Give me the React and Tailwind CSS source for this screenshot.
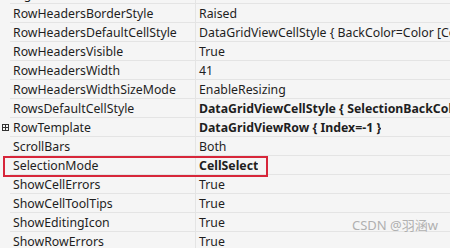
import React from "react";

const rows = [
  { n: "RightToLeft", v: "No" },
  { n: "RowHeadersBorderStyle", v: "Raised" },
  { n: "RowHeadersDefaultCellStyle", v: "DataGridViewCellStyle { BackColor=Color [Control] }" },
  { n: "RowHeadersVisible", v: "True" },
  { n: "RowHeadersWidth", v: "41" },
  { n: "RowHeadersWidthSizeMode", v: "EnableResizing" },
  { n: "RowsDefaultCellStyle", v: "DataGridViewCellStyle { SelectionBackColor=Color [Red] }", b: true },
  { n: "RowTemplate", v: "DataGridViewRow { Index=-1 }", b: true, exp: true },
  { n: "ScrollBars", v: "Both" },
  { n: "SelectionMode", v: "CellSelect", b: true },
  { n: "ShowCellErrors", v: "True" },
  { n: "ShowCellToolTips", v: "True" },
  { n: "ShowEditingIcon", v: "True" },
  { n: "ShowRowErrors", v: "True" },
];

export default function App() {
  return (
    <div
      className="relative w-[450px] h-[248px] overflow-hidden bg-[#f5f5f5] text-[12.3px] text-[#1e1e1e]"
      style={{ fontFamily: '"Noto Sans", "Noto Sans CJK SC", sans-serif' }}
    >
      <div className="flex flex-col mt-[-15px]">
        {rows.map((r, i) => (
          <div key={i} className="flex h-[19px] leading-[20px]">
            <div className="w-[10px] shrink-0 flex items-center justify-center">
              {r.exp && (
                <div className="w-[7px] h-[7px] border border-[#333] flex items-center justify-center relative">
                  <div className="w-[5px] h-[1px] bg-[#333]" />
                  <div className="absolute w-[1px] h-[5px] bg-[#333]" />
                </div>
              )}
            </div>
            <div className="flex flex-1 border-b border-[#e4e4e4]">
              <div className="w-[186px] shrink-0 pl-[3px] border-r border-[#e4e4e4] whitespace-nowrap overflow-hidden">
                {r.n}
              </div>
              <div className={"pl-[3px] whitespace-nowrap overflow-hidden " + (r.b ? "font-bold" : "")}>
                {r.v}
              </div>
            </div>
          </div>
        ))}
      </div>
      <div className="absolute left-[3px] top-[156px] w-[265px] h-[21px] border-2 border-[#d7263a]" />
      <div className="absolute left-[352px] top-[216px] text-[13px] text-[#b0b0b0]">
        CSDN @羽涵w
      </div>
    </div>
  );
}
